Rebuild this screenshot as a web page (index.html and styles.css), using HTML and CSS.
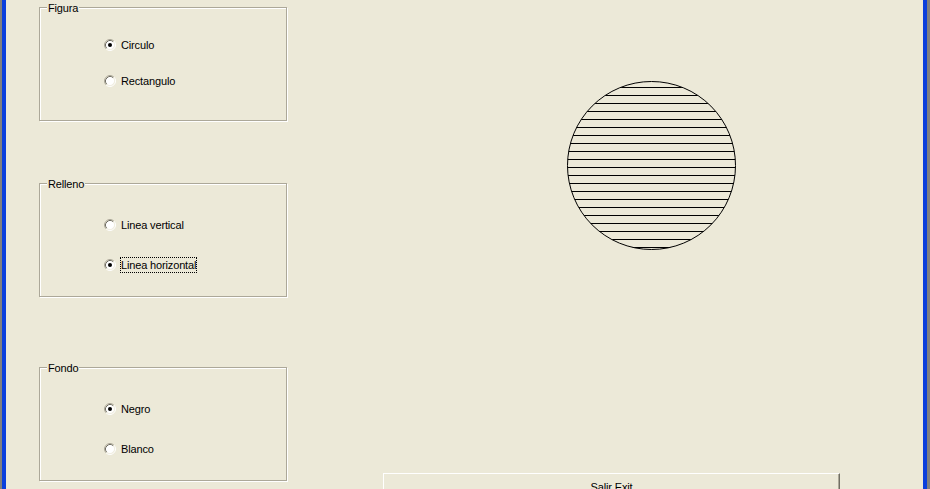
FILE: index.html
```html
<!DOCTYPE html>
<html lang="es">
<head>
<meta charset="utf-8">
<title>Figuras</title>
<link rel="stylesheet" href="styles.css">
</head>
<body>
<div class="window">
  <div class="frame">
    <div class="client">
      <div class="options">
        <div class="group group-figura">
          <span class="legend">Figura</span>
          <div class="row">
            <svg class="radio" viewBox="0 0 12 12" width="12" height="12"><circle cx="6" cy="6" r="4.5" fill="#fff"/><path d="M2.11 9.89A5.5 5.5 0 0 1 9.89 2.11" fill="none" stroke="#aca899"/><path d="M9.89 2.11A5.5 5.5 0 0 1 2.11 9.89" fill="none" stroke="#fff"/><path d="M2.82 9.18A4.5 4.5 0 0 1 9.18 2.82" fill="none" stroke="#716f64"/><path d="M9.18 2.82A4.5 4.5 0 0 1 2.82 9.18" fill="none" stroke="#f1efe2"/><circle cx="6" cy="6" r="2" fill="#000"/></svg>
            <span class="label">Circulo</span>
          </div>
          <div class="row">
            <svg class="radio" viewBox="0 0 12 12" width="12" height="12"><circle cx="6" cy="6" r="4.5" fill="#fff"/><path d="M2.11 9.89A5.5 5.5 0 0 1 9.89 2.11" fill="none" stroke="#aca899"/><path d="M9.89 2.11A5.5 5.5 0 0 1 2.11 9.89" fill="none" stroke="#fff"/><path d="M2.82 9.18A4.5 4.5 0 0 1 9.18 2.82" fill="none" stroke="#716f64"/><path d="M9.18 2.82A4.5 4.5 0 0 1 2.82 9.18" fill="none" stroke="#f1efe2"/></svg>
            <span class="label">Rectangulo</span>
          </div>
        </div>
        <div class="group group-relleno">
          <span class="legend">Relleno</span>
          <div class="row">
            <svg class="radio" viewBox="0 0 12 12" width="12" height="12"><circle cx="6" cy="6" r="4.5" fill="#fff"/><path d="M2.11 9.89A5.5 5.5 0 0 1 9.89 2.11" fill="none" stroke="#aca899"/><path d="M9.89 2.11A5.5 5.5 0 0 1 2.11 9.89" fill="none" stroke="#fff"/><path d="M2.82 9.18A4.5 4.5 0 0 1 9.18 2.82" fill="none" stroke="#716f64"/><path d="M9.18 2.82A4.5 4.5 0 0 1 2.82 9.18" fill="none" stroke="#f1efe2"/></svg>
            <span class="label">Linea vertical</span>
          </div>
          <div class="row">
            <svg class="radio" viewBox="0 0 12 12" width="12" height="12"><circle cx="6" cy="6" r="4.5" fill="#fff"/><path d="M2.11 9.89A5.5 5.5 0 0 1 9.89 2.11" fill="none" stroke="#aca899"/><path d="M9.89 2.11A5.5 5.5 0 0 1 2.11 9.89" fill="none" stroke="#fff"/><path d="M2.82 9.18A4.5 4.5 0 0 1 9.18 2.82" fill="none" stroke="#716f64"/><path d="M9.18 2.82A4.5 4.5 0 0 1 2.82 9.18" fill="none" stroke="#f1efe2"/><circle cx="6" cy="6" r="2" fill="#000"/></svg>
            <span class="label label-focus">Linea horizontal</span>
          </div>
        </div>
        <div class="group group-fondo">
          <span class="legend">Fondo</span>
          <div class="row">
            <svg class="radio" viewBox="0 0 12 12" width="12" height="12"><circle cx="6" cy="6" r="4.5" fill="#fff"/><path d="M2.11 9.89A5.5 5.5 0 0 1 9.89 2.11" fill="none" stroke="#aca899"/><path d="M9.89 2.11A5.5 5.5 0 0 1 2.11 9.89" fill="none" stroke="#fff"/><path d="M2.82 9.18A4.5 4.5 0 0 1 9.18 2.82" fill="none" stroke="#716f64"/><path d="M9.18 2.82A4.5 4.5 0 0 1 2.82 9.18" fill="none" stroke="#f1efe2"/><circle cx="6" cy="6" r="2" fill="#000"/></svg>
            <span class="label">Negro</span>
          </div>
          <div class="row">
            <svg class="radio" viewBox="0 0 12 12" width="12" height="12"><circle cx="6" cy="6" r="4.5" fill="#fff"/><path d="M2.11 9.89A5.5 5.5 0 0 1 9.89 2.11" fill="none" stroke="#aca899"/><path d="M9.89 2.11A5.5 5.5 0 0 1 2.11 9.89" fill="none" stroke="#fff"/><path d="M2.82 9.18A4.5 4.5 0 0 1 9.18 2.82" fill="none" stroke="#716f64"/><path d="M9.18 2.82A4.5 4.5 0 0 1 2.82 9.18" fill="none" stroke="#f1efe2"/></svg>
            <span class="label">Blanco</span>
          </div>
        </div>
      </div>
      <div class="stage">
        <svg class="canvas" viewBox="0 0 200 200" width="200" height="200">
          <defs>
            <clipPath id="disc"><circle cx="100.5" cy="100.5" r="84"/></clipPath>
          </defs>
          <g clip-path="url(#disc)" stroke="#000" stroke-width="1">
            <line x1="0" y1="22.5" x2="200" y2="22.5"/>
            <line x1="0" y1="30.5" x2="200" y2="30.5"/>
            <line x1="0" y1="38.5" x2="200" y2="38.5"/>
            <line x1="0" y1="46.5" x2="200" y2="46.5"/>
            <line x1="0" y1="54.5" x2="200" y2="54.5"/>
            <line x1="0" y1="62.5" x2="200" y2="62.5"/>
            <line x1="0" y1="70.5" x2="200" y2="70.5"/>
            <line x1="0" y1="78.5" x2="200" y2="78.5"/>
            <line x1="0" y1="86.5" x2="200" y2="86.5"/>
            <line x1="0" y1="94.5" x2="200" y2="94.5"/>
            <line x1="0" y1="102.5" x2="200" y2="102.5"/>
            <line x1="0" y1="110.5" x2="200" y2="110.5"/>
            <line x1="0" y1="118.5" x2="200" y2="118.5"/>
            <line x1="0" y1="126.5" x2="200" y2="126.5"/>
            <line x1="0" y1="134.5" x2="200" y2="134.5"/>
            <line x1="0" y1="142.5" x2="200" y2="142.5"/>
            <line x1="0" y1="150.5" x2="200" y2="150.5"/>
            <line x1="0" y1="158.5" x2="200" y2="158.5"/>
            <line x1="0" y1="166.5" x2="200" y2="166.5"/>
            <line x1="0" y1="174.5" x2="200" y2="174.5"/>
            <line x1="0" y1="182.5" x2="200" y2="182.5"/>
          </g>
          <circle cx="100.5" cy="100.5" r="84" fill="none" stroke="#000" stroke-width="1"/>
        </svg>
        <button class="button" type="button">Salir Exit</button>
      </div>
    </div>
  </div>
</div>
</body>
</html>
```
FILE: styles.css
```css
html, body {
  margin: 0;
  padding: 0;
  background: #ece9d8;
  overflow: hidden;
}

body {
  font-family: "Liberation Sans", Arial, sans-serif;
  font-size: 11px;
  line-height: 13px;
  letter-spacing: -0.15px;
  color: #000;
}

.window {
  width: 930px;
  height: 489px;
  box-sizing: border-box;
  border-left: 2px solid #808080;
  border-right: 3px solid #808080;
  overflow: hidden;
}

.frame {
  height: 100%;
  box-sizing: border-box;
  border-left: 4px solid #0a3fdd;
  border-right: 4px solid #0a3fdd;
  background: #ece9d8;
  overflow: hidden;
}

.client {
  display: flex;
  height: 100%;
}

.options {
  flex: none;
  width: 248px;
  padding-left: 33px;
  padding-top: 7px;
  display: flex;
  flex-direction: column;
}

.group {
  position: relative;
  flex: none;
  box-sizing: border-box;
  width: 248px;
  height: 114px;
  border: 1px solid #aca899;
  box-shadow: 1px 1px 0 #fff, inset 1px 1px 0 #fff;
  padding-left: 64px;
  padding-top: 33px;
  display: flex;
  flex-direction: column;
  gap: 24px;
}

.group-figura {
  padding-top: 29px;
  gap: 20px;
  margin-bottom: 62px;
}

.group-relleno {
  margin-bottom: 70px;
}

.legend {
  position: absolute;
  top: -6px;
  left: 7px;
  padding: 0 1px;
  background: #ece9d8;
  white-space: nowrap;
}

.row {
  display: flex;
  align-items: center;
  height: 16px;
  flex: none;
}

.radio {
  flex: none;
  display: block;
  margin-right: 5px;
}

.label {
  white-space: nowrap;
}

.label-focus {
  margin-left: -1px;
  border: 1px dotted #000;
  line-height: 14px;
}

.stage {
  flex: 1;
  display: flex;
  flex-direction: column;
  align-items: flex-start;
}

.canvas {
  display: block;
  flex: none;
  margin-left: 264px;
  margin-top: 65px;
}

.button {
  margin-left: 96px;
  margin-top: 208px;
  width: 457px;
  flex: none;
  box-sizing: border-box;
  padding: 7px 0 12px;
  background: #ece9d8;
  border-top: 1px solid #fff;
  border-left: 1px solid #fff;
  border-right: 1px solid #716f64;
  border-bottom: 1px solid #716f64;
  box-shadow: inset -1px -1px 0 #aca899;
  font-family: "Liberation Sans", Arial, sans-serif;
  font-size: 11px;
  line-height: 13px;
  letter-spacing: -0.15px;
  color: #000;
  text-align: center;
  display: block;
}
```
